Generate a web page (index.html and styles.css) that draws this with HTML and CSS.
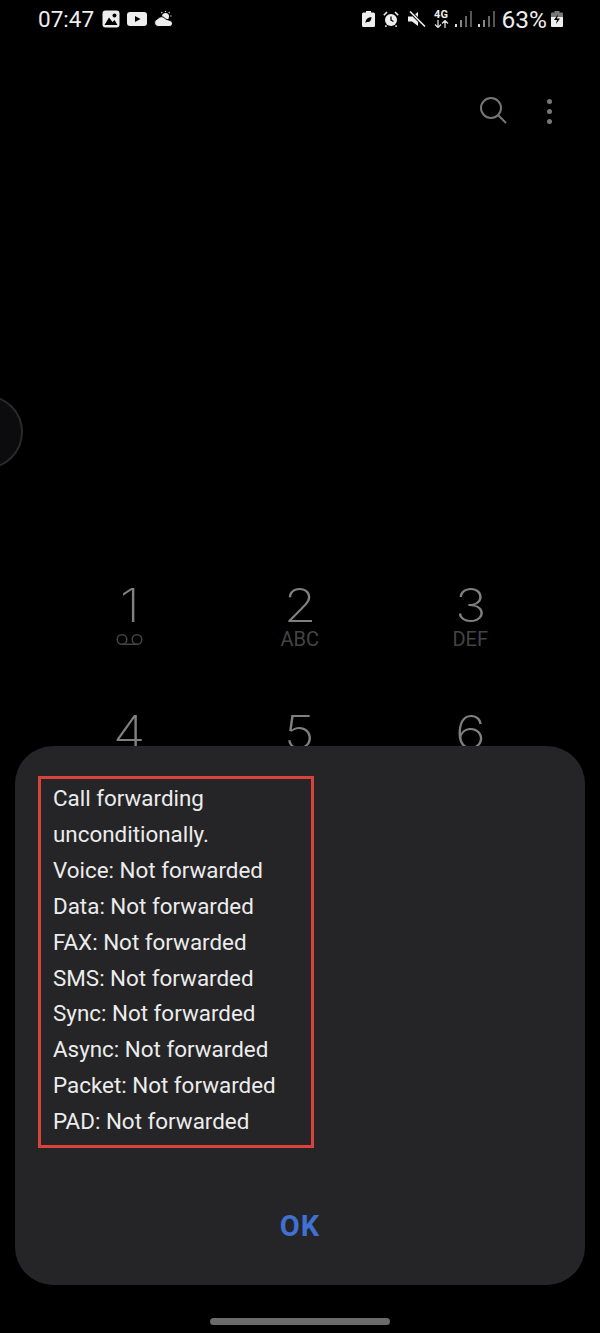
FILE: index.html
```html
<!DOCTYPE html>
<html lang="en">
<head>
    <meta charset="UTF-8">
    <meta name="viewport" content="width=device-width, initial-scale=1.0">
    <title>Call forwarding</title>
    <link rel="stylesheet" href="styles.css">
</head>
<body>
    <div class="screen">
        <!-- Status bar -->
        <div class="status-bar">
            <div class="status-left">
                <span class="status-time">07:47</span>
                <svg class="icon-gallery" viewBox="0 0 18 18">
                    <rect x="0.5" y="0.5" width="17" height="17" rx="3" fill="#eee"/>
                    <circle cx="12.5" cy="5.5" r="2" fill="#000"/>
                    <path d="M2.5 15 L7 7.5 L10.5 12 L12.5 10 L15.5 15 Z" fill="#000"/>
                </svg>
                <svg class="icon-video" viewBox="0 0 20 14">
                    <rect x="0" y="0" width="20" height="14" rx="3" fill="#eee"/>
                    <path d="M8 4 L13.5 7 L8 10 Z" fill="#000"/>
                </svg>
                <svg class="icon-weather" viewBox="0 0 18 16">
                    <circle cx="11.5" cy="5.5" r="3.5" fill="#eee"/>
                    <path d="M11.5 0 V1 M15.5 1.2 L14.8 2 M17.5 5 H16.4 M7.5 1.2 L8.2 2" stroke="#eee" stroke-width="1.2"/>
                    <path d="M4 15.5 A3.8 3.8 0 0 1 3.5 8 A4.6 4.6 0 0 1 11.5 8 L16 9.5 A3 3 0 0 1 15 15.5 Z" fill="#eee" stroke="#000"/>
                </svg>
            </div>
            <div class="status-right">
                <svg class="icon-saver" viewBox="0 0 13 16">
                    <path d="M4 0 H9 V1.5 H11.5 A1.5 1.5 0 0 1 13 3 V14.5 A1.5 1.5 0 0 1 11.5 16 H1.5 A1.5 1.5 0 0 1 0 14.5 V3 A1.5 1.5 0 0 1 1.5 1.5 H4 Z" fill="#eee"/>
                    <path d="M3.5 12 C3.5 8 6 6.5 9.5 6 C9.5 10 7.5 11.5 5 11 Z" fill="#000"/>
                </svg>
                <svg class="icon-alarm" viewBox="0 0 16 16">
                    <circle cx="8" cy="9" r="6" fill="#eee"/>
                    <path d="M8 5.5 V9.2 L10.5 10.5" fill="none" stroke="#000" stroke-width="1.3"/>
                    <path d="M0.8 4.2 L4 1 M15.2 4.2 L12 1 M3.5 14.5 L2.3 15.7 M12.5 14.5 L13.7 15.7" stroke="#eee" stroke-width="1.6"/>
                </svg>
                <svg class="icon-mute" viewBox="0 0 18 16">
                    <path d="M0 5.5 H4 L10 1 V15 L4 10.5 H0 Z" fill="#eee"/>
                    <path d="M2 0.5 L17 15.5" stroke="#000" stroke-width="3.4"/>
                    <path d="M2 0.5 L17 15.5" stroke="#eee" stroke-width="1.6"/>
                </svg>
                <div class="network">
                    <span class="network-type">4G</span>
                    <svg class="icon-arrows" viewBox="0 0 15 8">
                        <path d="M4 0 V7 M1 4.5 L4 7.5 L7 4.5 M11 8 V1 M8 3.5 L11 0.5 L14 3.5" fill="none" stroke="#ddd" stroke-width="1.3"/>
                    </svg>
                </div>
                <svg class="icon-signal" viewBox="0 0 18 16">
                    <rect x="0" y="13" width="2" height="3" fill="#ddd"/>
                    <rect x="5" y="9" width="2" height="7" fill="#888"/>
                    <rect x="10" y="5" width="2" height="11" fill="#666"/>
                    <rect x="15" y="0" width="2" height="16" fill="#555"/>
                </svg>
                <svg class="icon-signal" viewBox="0 0 18 16">
                    <rect x="0" y="13" width="2" height="3" fill="#ddd"/>
                    <rect x="5" y="9" width="2" height="7" fill="#888"/>
                    <rect x="10" y="5" width="2" height="11" fill="#666"/>
                    <rect x="15" y="0" width="2" height="16" fill="#555"/>
                </svg>
                <span class="status-battery">63%</span>
                <svg class="icon-battery" viewBox="0 0 12 16">
                    <path d="M3.5 0 H8.5 V1.5 H11 A1 1 0 0 1 12 2.5 V6 H0 V2.5 A1 1 0 0 1 1 1.5 H3.5 Z" fill="#777"/>
                    <path d="M0 6 H12 V15 A1 1 0 0 1 11 16 H1 A1 1 0 0 1 0 15 Z" fill="#eee"/>
                    <path d="M7 3.5 L3 9 H6 L5 13 L9 7.5 H6 Z" fill="#000"/>
                </svg>
            </div>
        </div>

        <!-- Search and more -->
        <div class="toolbar">
            <svg class="icon-search" viewBox="0 0 28 28">
                <circle cx="11" cy="11" r="10" fill="none" stroke="#777" stroke-width="2"/>
                <path d="M18.5 18.5 L26 26" stroke="#777" stroke-width="2"/>
            </svg>
            <div class="more">
                <span class="more-dot"></span>
                <span class="more-dot"></span>
                <span class="more-dot"></span>
            </div>
        </div>

        <!-- Dial pad behind the dialog -->
        <div class="dialpad">
            <div class="key">
                <span class="key-digit">1</span>
                <svg class="icon-voicemail" viewBox="0 0 27 13">
                    <circle cx="6" cy="6.5" r="4.8" fill="none" stroke="#444" stroke-width="1.5"/>
                    <circle cx="21" cy="6.5" r="4.8" fill="none" stroke="#444" stroke-width="1.5"/>
                    <path d="M6 11.3 H21" stroke="#444" stroke-width="1.5"/>
                </svg>
            </div>
            <div class="key">
                <span class="key-digit">2</span>
                <span class="key-letters">ABC</span>
            </div>
            <div class="key">
                <span class="key-digit">3</span>
                <span class="key-letters">DEF</span>
            </div>
            <div class="key">
                <span class="key-digit">4</span>
            </div>
            <div class="key">
                <span class="key-digit">5</span>
            </div>
            <div class="key">
                <span class="key-digit">6</span>
            </div>
        </div>

        <div class="side-handle"></div>

        <!-- Dialog -->
        <div class="dialog">
            <div class="dialog-message">
                <div>Call forwarding unconditionally.</div>
                <div>Voice: Not forwarded</div>
                <div>Data: Not forwarded</div>
                <div>FAX: Not forwarded</div>
                <div>SMS: Not forwarded</div>
                <div>Sync: Not forwarded</div>
                <div>Async: Not forwarded</div>
                <div>Packet: Not forwarded</div>
                <div>PAD: Not forwarded</div>
            </div>
            <div class="dialog-ok">OK</div>
        </div>

        <div class="home-bar"></div>
    </div>
</body>
</html>
```

FILE: styles.css
```css
/* Basic Styling */
body {
    margin: 0;
    background-color: #000;
    font-family: Roboto, "Liberation Sans", sans-serif;
}

.screen {
    position: relative;
    width: 600px;
    height: 1333px;
    overflow: hidden;
    background-color: #000;
}

/* Status bar */
.status-bar {
    display: flex;
    justify-content: space-between;
    align-items: center;
    height: 38px;
    padding: 0 37px 0 38px;
    color: #eee;
}

.status-left,
.status-right {
    display: flex;
    align-items: center;
}

.status-time {
    width: 55px;
    font-size: 22.5px;
    margin-right: 9px;
}

.icon-gallery {
    width: 18px;
    height: 18px;
    margin-right: 7px;
}

.icon-video {
    width: 20px;
    height: 14px;
    margin-right: 7px;
}

.icon-weather {
    width: 18px;
    height: 16px;
}

.icon-saver {
    width: 13px;
    height: 16px;
    margin-right: 8px;
}

.icon-alarm {
    width: 16px;
    height: 16px;
    margin-right: 9px;
}

.icon-mute {
    width: 18px;
    height: 16px;
    margin-right: 8px;
}

.network {
    display: flex;
    flex-direction: column;
    align-items: center;
    width: 15px;
    margin-right: 6px;
}

.network-type {
    font-size: 11px;
    font-weight: 700;
    line-height: 10px;
}

.icon-arrows {
    width: 15px;
    height: 8px;
}

.icon-signal {
    width: 18px;
    height: 16px;
    margin-right: 5px;
}

.status-battery {
    font-size: 24.5px;
    margin: 0 4px 0 1px;
}

.icon-battery {
    width: 12px;
    height: 16px;
}

/* Toolbar */
.toolbar {
    display: flex;
    justify-content: flex-end;
    align-items: center;
    gap: 38.5px;
    height: 28px;
    margin-top: 59px;
    padding-right: 48.5px;
}

.icon-search {
    width: 28px;
    height: 28px;
}

.more {
    display: flex;
    flex-direction: column;
    gap: 5px;
}

.more-dot {
    width: 5px;
    height: 5px;
    border-radius: 50%;
    background-color: #777;
}

/* Dial pad */
.dialpad {
    display: grid;
    grid-template-columns: repeat(3, 170.5px);
    grid-auto-rows: 127px;
    margin-top: 462px;
    padding-left: 44px;
}

.key {
    display: flex;
    flex-direction: column;
    align-items: center;
}

.key-digit {
    font-family: Inter, "Liberation Sans", sans-serif;
    font-size: 46px;
    font-weight: 200;
    line-height: 36px;
    color: #808080;
    transform: scaleX(1.15);
}

.key-letters {
    font-size: 20px;
    line-height: 20px;
    color: #444;
    margin-top: 6px;
}

.icon-voicemail {
    width: 27px;
    height: 13px;
    margin-top: 10px;
}

.side-handle {
    position: absolute;
    left: -51px;
    top: 395px;
    width: 70px;
    height: 70px;
    border: 2px solid #2a2a2a;
    border-radius: 50%;
    background-color: #0c0c0e;
}

/* Dialog */
.dialog {
    position: absolute;
    left: 15px;
    top: 746px;
    width: 570px;
    height: 539px;
    box-sizing: border-box;
    padding: 30px 23px 0;
    border-radius: 38px;
    background-color: #252527;
}

.dialog-message {
    box-sizing: border-box;
    width: 276px;
    padding: 2px 12px 5px;
    border: 3px solid #d8443c;
    font-size: 22.4px;
    line-height: 35.9px;
    color: #ececec;
}

.dialog-ok {
    margin-top: 58px;
    text-align: center;
    font-size: 29px;
    font-weight: 700;
    letter-spacing: 1px;
    line-height: 40px;
    color: #3f70d2;
}

.home-bar {
    position: absolute;
    left: 210px;
    top: 1318px;
    width: 180px;
    height: 7px;
    border-radius: 4px;
    background-color: #6b6b6b;
}
```
